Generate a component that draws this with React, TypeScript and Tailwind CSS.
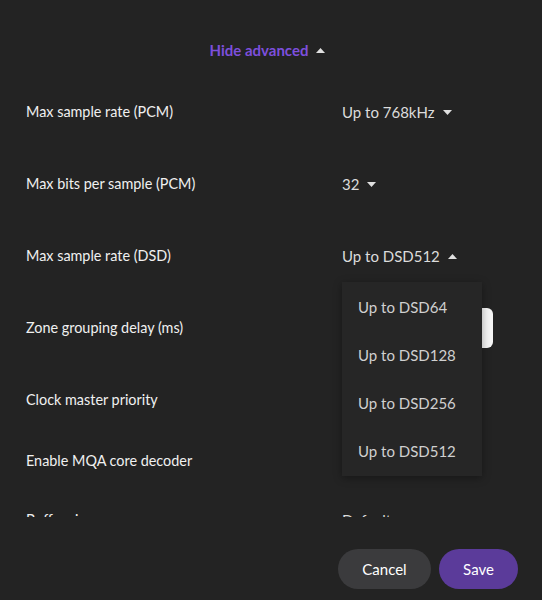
import React from "react";

const Caret = ({ up = false }: { up?: boolean }) => (
  <svg width="9" height="5" viewBox="0 0 9 5" className="shrink-0">
    {up ? <path d="M0 5 L4.5 0 L9 5 Z" fill="#e0e0e0" /> : <path d="M0 0 L9 0 L4.5 5 Z" fill="#e0e0e0" />}
  </svg>
);

const Select = ({ value, open = false }: { value: string; open?: boolean }) => (
  <div className="flex items-center gap-[8px] text-[15px] text-[#dcdcdc]">
    <span>{value}</span>
    <Caret up={open} />
  </div>
);

const rows: { label: string; h: string; value: React.ReactNode }[] = [
  { label: "Max sample rate (PCM)", h: "h-[72px]", value: <Select value="Up to 768kHz" /> },
  { label: "Max bits per sample (PCM)", h: "h-[72px]", value: <Select value="32" /> },
  { label: "Max sample rate (DSD)", h: "h-[72px]", value: <Select value="Up to DSD512" open /> },
  {
    label: "Zone grouping delay (ms)",
    h: "h-[72px]",
    value: <div className="h-[40px] w-[151px] rounded-md bg-[#f5f5f5]" />,
  },
  // value sits under the open dropdown
  { label: "Clock master priority", h: "h-[72px]", value: null },
  { label: "Enable MQA core decoder", h: "h-[50px]", value: <div className="h-[20px] w-[36px] rounded-full bg-[#3c3c3e]" /> },
  { label: "Buffer size", h: "h-[68px]", value: <Select value="Default" /> },
];

const options = ["Up to DSD64", "Up to DSD128", "Up to DSD256", "Up to DSD512"];

export default function App() {
  return (
    <div
      className="relative w-[542px] h-[600px] bg-[#232323] flex flex-col overflow-hidden"
      style={{ fontFamily: "Lato, 'Open Sans', sans-serif" }}
    >
      {/* Scroll area */}
      <div className="h-[517px] overflow-hidden shrink-0">
        <div className="h-[76px] pt-[41px] flex justify-center pr-[7px]">
          <button className="flex items-center gap-[8px] h-[18px] text-[15px] font-bold text-[#7d4fdc] leading-[18px]">
            Hide advanced
            <Caret up />
          </button>
        </div>

        {rows.map((row) => (
          <div key={row.label} className={`${row.h} px-[26px] grid grid-cols-[316px_1fr] items-center`}>
            <span className="text-[14.4px] text-[#f0f0f0]">{row.label}</span>
            <div>{row.value}</div>
          </div>
        ))}
      </div>

      {/* Footer */}
      <div className="flex justify-end gap-[8px] pt-[32px] pr-[24px]">
        <button className="h-[40px] w-[93px] rounded-full bg-[#3b3b3d] text-[15px] text-white">Cancel</button>
        <button className="h-[40px] w-[79px] rounded-full bg-[#5b3b9a] text-[15px] text-white">Save</button>
      </div>

      {/* Open dropdown */}
      <div className="absolute left-[342px] top-[282px] w-[140px] py-[1px] bg-[#262626] shadow-[0_2px_8px_rgba(0,0,0,0.35)]">
        {options.map((o) => (
          <div key={o} className="h-[48px] flex items-center px-[16px] text-[15px] text-[#d0d0d0]">
            {o}
          </div>
        ))}
      </div>
    </div>
  );
}
